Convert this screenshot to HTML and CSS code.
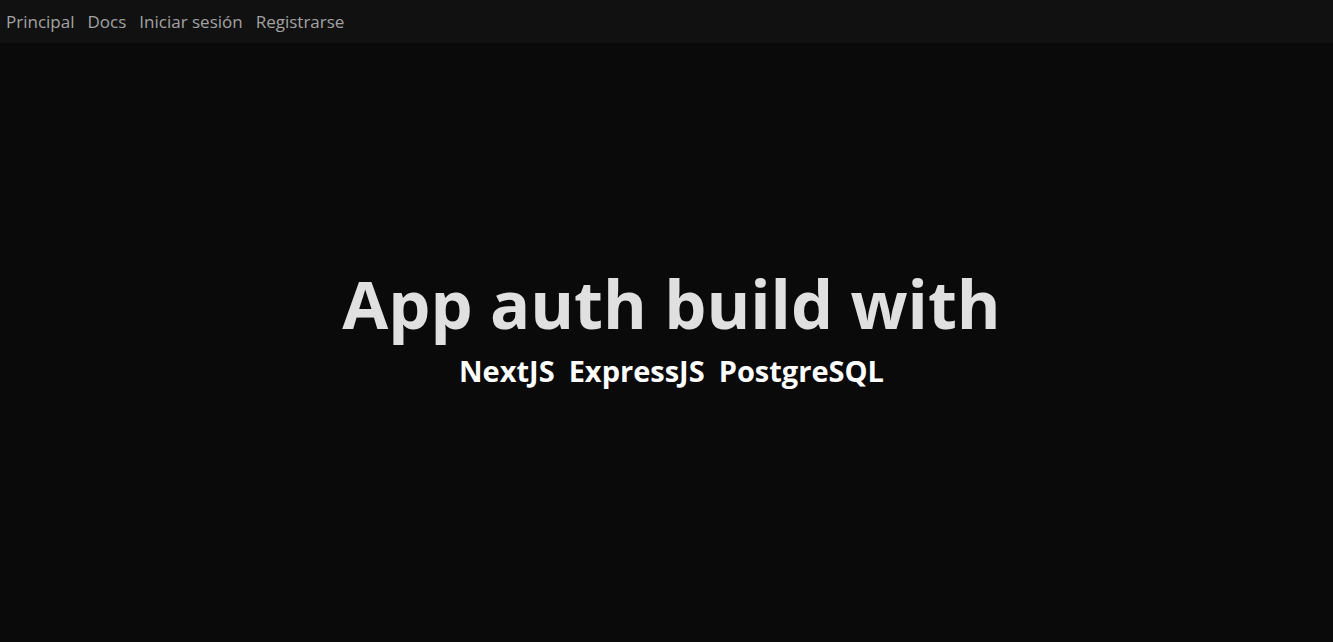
FILE: index.html
```html
<!DOCTYPE html>
<html lang="es">
<head>
    <meta charset="UTF-8">
    <meta name="viewport" content="width=device-width, initial-scale=1.0">
    <title>App auth</title>
    <link rel="stylesheet" href="styles.css">
</head>
<body>
    <nav class="navbar">
        <a href="#">Principal</a>
        <a href="#">Docs</a>
        <a href="#">Iniciar sesión</a>
        <a href="#">Registrarse</a>
    </nav>

    <main class="hero">
        <h1 class="hero-title">App auth build with</h1>
        <div class="stack">
            <span>NextJS</span>
            <span>ExpressJS</span>
            <span>PostgreSQL</span>
        </div>
    </main>
</body>
</html>
```

FILE: styles.css
```css
html, body {
    height: 100%;
}
body {
    margin: 0;
    font-family: "Open Sans", "Noto Sans", sans-serif;
    background-color: #0a0a0a;
    display: flex;
    flex-direction: column;
}
.navbar {
    height: 43px;
    background-color: #111111;
    display: flex;
    align-items: center;
    gap: 13px;
    padding: 0 6px;
}
.navbar a {
    color: #a3a3a3;
    text-decoration: none;
    font-size: 17px;
}
.hero {
    flex: 1;
    display: flex;
    flex-direction: column;
    align-items: center;
    justify-content: center;
    padding: 0 0 24px 10px;
}
.hero-title {
    margin: 0;
    font-size: 66.7px;
    line-height: 1;
    font-weight: 700;
    color: #e0e0e0;
}
.stack {
    display: flex;
    gap: 14px;
    margin-top: 14px;
    color: #ffffff;
    font-size: 29px;
    font-weight: 700;
}
```
